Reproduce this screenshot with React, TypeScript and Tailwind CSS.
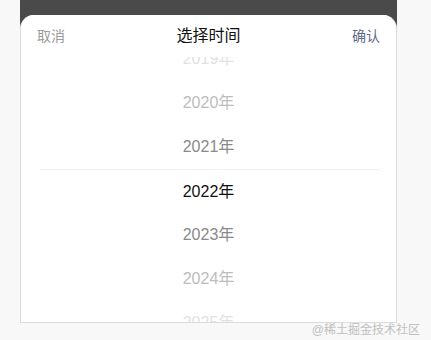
const YEARS = [
  { y: "2019年", c: "text-[#e2e2e2]" },
  { y: "2020年", c: "text-[#bdbdbd]" },
  { y: "2021年", c: "text-[#8a8a8a]" },
  { y: "2022年", c: "text-[#111111]" },
  { y: "2023年", c: "text-[#8a8a8a]" },
  { y: "2024年", c: "text-[#bdbdbd]" },
  { y: "2025年", c: "text-[#e2e2e2]" },
];

export default function App() {
  return (
    <div
      className="relative w-[431px] h-[340px] overflow-hidden bg-[#f8f8f8]"
      style={{ fontFamily: '"Liberation Sans", "Noto Sans CJK SC", sans-serif' }}
    >
      <div className="ml-[20px] w-[377px] bg-[#4a4a4a] pt-[15px]">
        <div className="h-[308px] bg-white rounded-t-[14px] border-x border-b border-[#dcdcdc] flex flex-col overflow-hidden">
          <div className="h-[42px] shrink-0 flex items-center justify-between px-[16px] bg-white relative z-10">
            <span className="text-[14px] text-[#9a9a9a]">取消</span>
            <span className="text-[16px] text-[#111]">选择时间</span>
            <span className="text-[14px] text-[#5f6b8a]">确认</span>
          </div>
          <div className="relative flex-1 overflow-hidden">
            <div className="-mt-[20px] flex flex-col">
              {YEARS.map((r, i) => (
                <div
                  key={i}
                  className={`h-[44px] flex items-center justify-center text-[16px] ${r.c} ${
                    i === 3 ? "border-t border-[#f2f2f2] ml-[19px] mr-[16px] pr-[3px]" : ""
                  }`}
                >
                  {r.y}
                </div>
              ))}
            </div>
          </div>
        </div>
      </div>
      <span className="absolute right-[11px] top-[321px] text-[12px] text-[#c0c0c0]">
        @稀土掘金技术社区
      </span>
    </div>
  );
}
